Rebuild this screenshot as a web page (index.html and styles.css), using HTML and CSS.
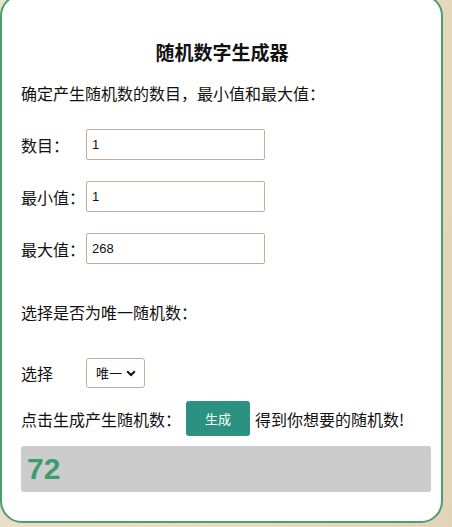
FILE: index.html
```html
<!DOCTYPE html>
<html lang="zh">
<head>
<meta charset="utf-8">
<title>随机数字生成器</title>
<link rel="stylesheet" href="styles.css">
</head>
<body>
<div class="card">
  <h2 class="title">随机数字生成器</h2>
  <p class="intro">确定产生随机数的数目，最小值和最大值：</p>
  <div class="row first">
    <label class="label">数目：</label>
    <input class="field" type="text" value="1">
  </div>
  <div class="row">
    <label class="label">最小值：</label>
    <input class="field" type="text" value="1">
  </div>
  <div class="row">
    <label class="label">最大值：</label>
    <input class="field" type="text" value="268">
  </div>
  <p class="question">选择是否为唯一随机数：</p>
  <div class="row select-row">
    <label class="label">选择</label>
    <div class="select">
      <span class="select-text">唯一</span>
      <svg class="chev" width="10" height="7" viewBox="0 0 10 7"><path d="M1.2 1.2 L5 5 L8.8 1.2" fill="none" stroke="#111" stroke-width="2"/></svg>
    </div>
  </div>
  <div class="gen-row">
    <span>点击生成产生随机数：</span>
    <button class="btn">生成</button>
    <span>得到你想要的随机数!</span>
  </div>
  <div class="result">72</div>
</div>
</body>
</html>
```
FILE: styles.css
```css
html, body {
  margin: 0;
  padding: 0;
}
body {
  width: 452px;
  height: 527px;
  overflow: hidden;
  background: linear-gradient(100deg, #eadfc8 0%, #e9dcc2 60%, #e2d3b8 100%);
  font-family: "Noto Sans CJK SC", "Noto Sans", sans-serif;
  color: #111;
  font-size: 16px;
}
.card {
  box-sizing: border-box;
  width: 443px;
  margin-top: -6px;
  background: #fff;
  border: 2px solid #4a9e70;
  border-radius: 22px;
  padding: 44px 9px 29px 19px;
}
.title {
  margin: 0;
  font-size: 19px;
  font-weight: bold;
  line-height: 24px;
  text-align: center;
  padding-right: 9px;
}
.intro {
  margin: 17px 0 0;
  line-height: 24px;
}
.row {
  display: flex;
  align-items: center;
  height: 31px;
  margin-top: 21px;
}
.row.first {
  margin-top: 24px;
}
.label {
  width: 65px;
  flex: none;
  line-height: 24px;
}
.field {
  box-sizing: border-box;
  width: 179px;
  height: 31px;
  border: 1px solid #bfaea4;
  border-radius: 2px;
  padding: 0 5px;
  font-family: "Liberation Sans", Arial, sans-serif;
  font-size: 13px;
  color: #111;
  background: #fff;
  margin: 0;
  outline: none;
}
.question {
  margin: 36px 0 0;
  line-height: 24px;
}
.select-row {
  margin-top: 34px;
  height: 30px;
}
.select {
  box-sizing: border-box;
  width: 59px;
  height: 30px;
  border: 1px solid #bfaea4;
  border-radius: 3px;
  display: flex;
  align-items: center;
  padding: 0 8px 0 9px;
  justify-content: space-between;
}
.select-text {
  font-size: 13px;
  line-height: 16px;
}
.chev {
  display: block;
}
.gen-row {
  display: flex;
  align-items: center;
  margin-top: 13px;
  height: 35px;
  line-height: 24px;
}
.btn {
  box-sizing: border-box;
  width: 64px;
  height: 35px;
  margin: 0 5px;
  border: none;
  border-radius: 3px;
  background: #2b9282;
  color: #fff;
  font-family: "Noto Sans CJK SC", sans-serif;
  font-size: 13px;
  padding: 0;
}
.result {
  box-sizing: border-box;
  margin-top: 10px;
  width: 410px;
  height: 46px;
  background: #cccccc;
  border-radius: 3px;
  padding-left: 6px;
  font-family: "Liberation Sans", Arial, sans-serif;
  font-weight: bold;
  font-size: 30px;
  line-height: 46px;
  color: #3b9c6c;
}
```
